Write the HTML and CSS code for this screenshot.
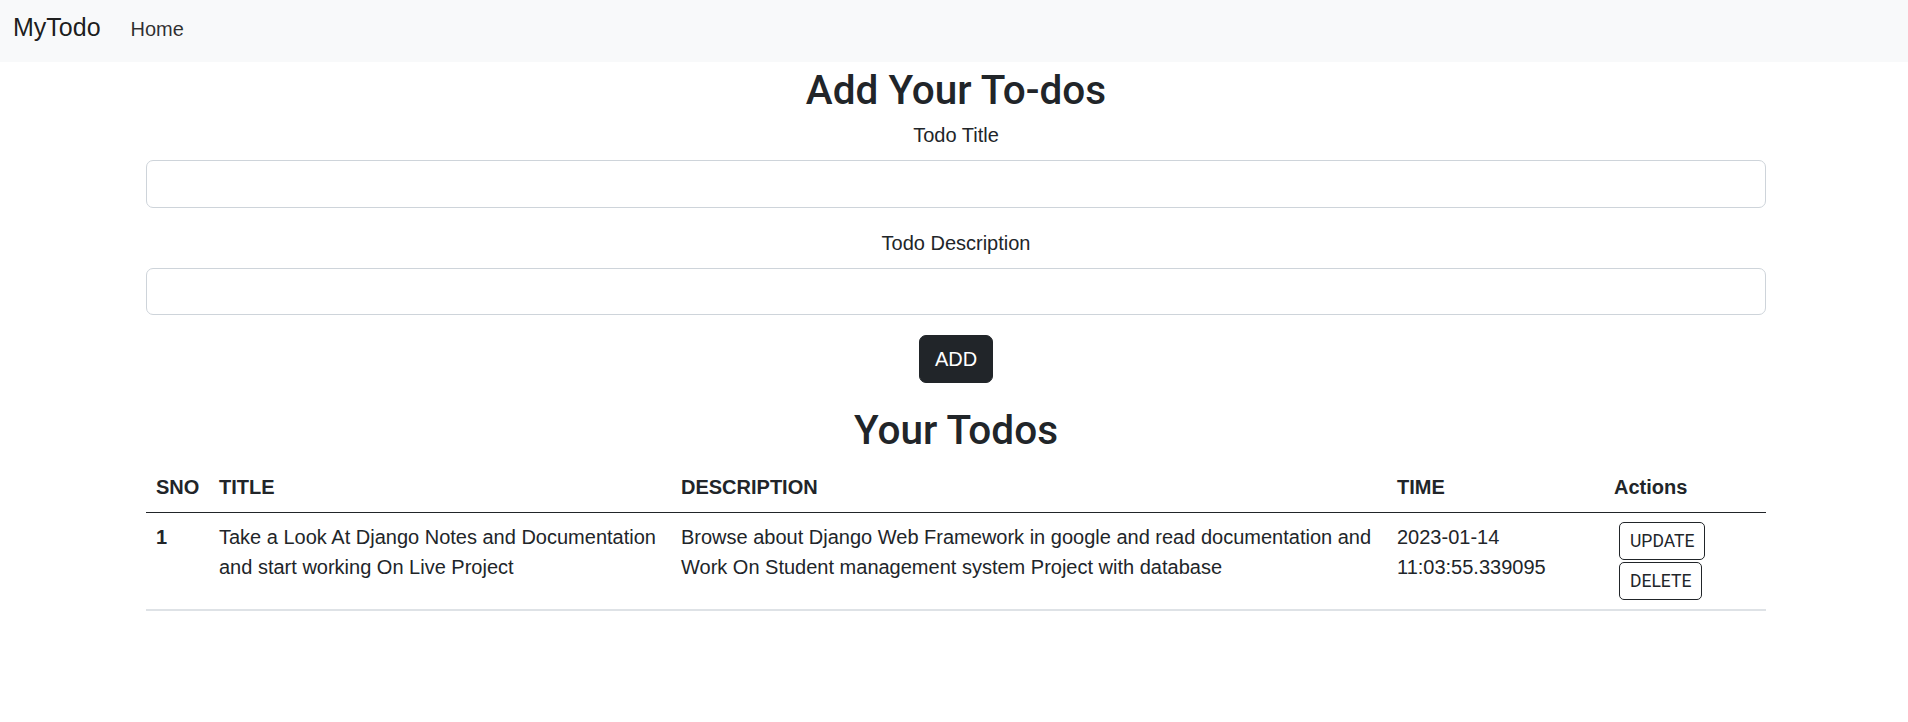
FILE: index.html
```html
<!DOCTYPE html>
<html lang="en">
<head>
<meta charset="utf-8">
<title>MyTodo</title>
<link rel="stylesheet" href="styles.css">
</head>
<body>
<nav class="navbar">
  <a class="brand" href="#">MyTodo</a>
  <a class="nav-link" href="#">Home</a>
</nav>
<main class="container">
  <h1 class="heading heading-top">Add Your To-dos</h1>
  <form class="todo-form">
    <div class="field">
      <label class="field-label" for="title">Todo Title</label>
      <input class="field-input" type="text" id="title">
    </div>
    <div class="field">
      <label class="field-label" for="desc">Todo Description</label>
      <input class="field-input" type="text" id="desc">
    </div>
    <div class="form-actions">
      <button type="button" class="btn-dark">ADD</button>
    </div>
  </form>
  <h2 class="heading heading-list">Your Todos</h2>
  <table class="todo-table">
    <colgroup>
      <col class="c-sno"><col class="c-title"><col class="c-desc"><col class="c-time"><col class="c-act">
    </colgroup>
    <thead>
      <tr>
        <th>SNO</th>
        <th>TITLE</th>
        <th>DESCRIPTION</th>
        <th>TIME</th>
        <th>Actions</th>
      </tr>
    </thead>
    <tbody>
      <tr>
        <th class="row-num">1</th>
        <td>Take a Look At Django Notes and Documentation and start working On Live Project</td>
        <td>Browse about Django Web Framework in google and read documentation and Work On Student management system Project with database</td>
        <td>2023-01-14 11:03:55.339095</td>
        <td>
          <div class="actions">
            <button type="button" class="btn-outline">UPDATE</button>
            <button type="button" class="btn-outline">DELETE</button>
          </div>
        </td>
      </tr>
    </tbody>
  </table>
</main>
</body>
</html>
```
FILE: styles.css
```css
* { box-sizing: border-box; }

html, body {
  margin: 0;
  padding: 0;
  background: #ffffff;
}

body {
  font-family: "Liberation Sans", Arial, sans-serif;
  font-size: 20px;
  line-height: 1.5;
  color: #212529;
}

/* Navbar */
.navbar {
  height: 62px;
  background: #f8f9fa;
  display: flex;
  align-items: baseline;
  padding: 9px 10px 0 13px;
}

.brand {
  font-size: 25px;
  line-height: 37.5px;
  color: rgba(0, 0, 0, 0.9);
  text-decoration: none;
  margin-right: 20px;
}

.nav-link {
  font-size: 20px;
  line-height: 30px;
  color: rgba(0, 0, 0, 0.82);
  text-decoration: none;
  padding: 0 10px;
}

/* Container */
.container {
  width: 1620px;
  margin: 0 142px 0 146px;
}

.heading {
  font-family: Roboto, "Liberation Sans", sans-serif;
  font-weight: 500;
  font-size: 40.5px;
  line-height: 48px;
  text-align: center;
  margin: 0;
  color: #212529;
}

.heading-top {
  padding-top: 4px;
  margin-bottom: 6px;
}

.heading-list {
  margin-top: 23px;
  margin-bottom: 8px;
}

/* Form */
.todo-form {
  display: flex;
  flex-direction: column;
}

.field {
  display: flex;
  flex-direction: column;
  align-items: stretch;
  margin-bottom: 20px;
}

.field-label {
  text-align: center;
  line-height: 30px;
  margin-bottom: 10px;
}

.field-input {
  height: 47.5px;
  border: 1px solid #ced4da;
  border-radius: 7px;
  padding: 7.5px 15px;
  font: inherit;
  background: #fff;
}

.form-actions {
  display: flex;
  justify-content: center;
}

.btn-dark {
  font-family: "Liberation Sans", Arial, sans-serif;
  font-size: 20px;
  line-height: 30px;
  height: 47.5px;
  padding: 7.5px 15px;
  color: #fff;
  background: #212529;
  border: 1px solid #212529;
  border-radius: 7px;
}

/* Table */
.todo-table {
  width: 100%;
  border-collapse: collapse;
  table-layout: fixed;
  vertical-align: top;
  text-align: left;
}

.c-sno { width: 63px; }
.c-title { width: 462px; }
.c-desc { width: 716px; }
.c-time { width: 217px; }
.c-act { width: 162px; }

.todo-table th,
.todo-table td {
  padding: 10px;
  line-height: 30px;
  vertical-align: top;
}

.todo-table thead th {
  font-weight: 700;
  vertical-align: bottom;
  border-bottom: 1.5px solid #212529;
}

.todo-table tbody tr {
  border-bottom: 2px solid #dee2e6;
}

.todo-table tbody td,
.todo-table tbody th {
  padding-top: 9px;
  padding-bottom: 9px;
}

.row-num {
  font-weight: 700;
}

.actions {
  display: flex;
  flex-direction: column;
  align-items: flex-start;
  gap: 2px;
  margin-left: 5px;
}

.btn-outline {
  font-family: Roboto, "Liberation Sans", sans-serif;
  font-size: 17.5px;
  line-height: 26px;
  padding: 5px 10px;
  color: #212529;
  background: transparent;
  border: 1px solid #212529;
  border-radius: 5px;
}
```
